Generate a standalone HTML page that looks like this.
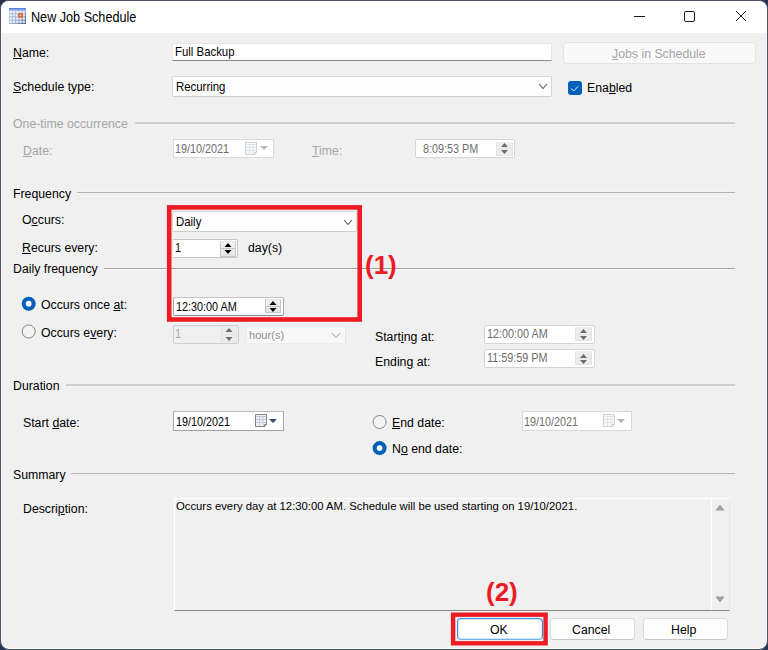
<!DOCTYPE html><html><head><meta charset="utf-8"><title>New Job Schedule</title><style>
*{margin:0;padding:0}
html,body{width:768px;height:650px;overflow:hidden}
body{background:#243451;position:relative;font-family:"Liberation Sans",sans-serif}
.b{position:absolute}
.t{position:absolute;white-space:nowrap;line-height:14px;font-family:"Liberation Sans",sans-serif}
u{text-decoration:underline;text-underline-offset:1px}
#win{left:0;top:0;width:768px;height:650px;background:#f0f0f0;border:1px solid #4d5565;border-radius:9px;box-sizing:border-box;box-shadow:inset 0 0 0 1px #f8f8f6}
#title{left:1px;top:1px;width:766px;height:32px;background:#fff;border-radius:8px 8px 0 0}
</style></head><body>
<div class="b" id="win"></div>
<div class="b" id="title"></div>
<svg class="b" style="left:9px;top:8px" width="17" height="16">
<defs><linearGradient id="g1" x1="0" y1="0" x2="1" y2="1"><stop offset="0" stop-color="#b9cae6"/><stop offset="0.6" stop-color="#9aaed0"/><stop offset="1" stop-color="#4d5f8c"/></linearGradient>
<linearGradient id="g2" x1="0" y1="0" x2="0" y2="1"><stop offset="0" stop-color="#3d6fe0"/><stop offset="1" stop-color="#9fb8ec"/></linearGradient></defs>
<rect x="0" y="0" width="17" height="16" fill="url(#g1)"/>
<rect x="0" y="0" width="17" height="2.2" fill="url(#g2)"/>
<g fill="#f2f6fc"><rect x="0.7" y="3.0" width="2.2" height="2.2"/><rect x="3.9" y="3.0" width="2.2" height="2.2"/><rect x="7.2" y="3.0" width="2.2" height="2.2"/><rect x="10.4" y="3.0" width="2.2" height="2.2"/><rect x="13.6" y="3.0" width="2.2" height="2.2"/><rect x="0.7" y="6.2" width="2.2" height="2.2"/><rect x="3.9" y="6.2" width="2.2" height="2.2"/><rect x="7.2" y="6.2" width="2.2" height="2.2"/><rect x="10.4" y="6.2" width="2.2" height="2.2"/><rect x="13.6" y="6.2" width="2.2" height="2.2"/><rect x="0.7" y="9.5" width="2.2" height="2.2"/><rect x="3.9" y="9.5" width="2.2" height="2.2"/><rect x="7.2" y="9.5" width="2.2" height="2.2"/><rect x="10.4" y="9.5" width="2.2" height="2.2"/><rect x="13.6" y="9.5" width="2.2" height="2.2"/><rect x="0.7" y="12.7" width="2.2" height="2.2"/><rect x="3.9" y="12.7" width="2.2" height="2.2"/><rect x="7.2" y="12.7" width="2.2" height="2.2"/><rect x="10.4" y="12.7" width="2.2" height="2.2"/><rect x="13.6" y="12.7" width="2.2" height="2.2"/></g>
<circle cx="11.5" cy="7.3" r="2.6" fill="#e3603c"/><circle cx="11.5" cy="7.3" r="0.9" fill="#fbe6dc"/>
</svg>
<div class="t" style="left:31px;top:10px;font-size:14.2px;color:#000;transform:scaleX(0.89);transform-origin:0 0;">New Job Schedule</div>
<svg class="b" style="left:630px;top:8px" width="130" height="18"><path d="M4 8.5H15" stroke="#1a1a1a" stroke-width="1"/><rect x="54.5" y="3.5" width="10" height="10" rx="1.5" fill="none" stroke="#1a1a1a" stroke-width="1"/><path d="M106 3L116 13M116 3L106 13" stroke="#1a1a1a" stroke-width="1"/></svg>
<div class="t" style="left:13px;top:46px;font-size:12.3px;color:#000;"><u>N</u>ame:</div>
<div class="t" style="left:13px;top:80px;font-size:12.3px;color:#000;"><u>S</u>chedule type:</div>
<div class="b" style="left:172px;top:43px;width:380px;height:18px;box-sizing:border-box;background:#fff;border:1px solid #e6e6e6;border-bottom:1px solid #8a8a8a"></div>
<div class="t" style="left:175px;top:45px;font-size:12.2px;color:#000;transform:scaleX(0.935);transform-origin:0 0;">Full Backup</div>
<div class="b" style="left:172px;top:76px;width:380px;height:21px;box-sizing:border-box;background:#fdfdfd;border:1px solid #d9d9d9;border-bottom-color:#cdcdcd;border-radius:2px"></div>
<div class="t" style="left:176px;top:80px;font-size:12.2px;color:#000;transform:scaleX(0.935);transform-origin:0 0;">Recurring</div>
<svg class="b" style="left:538px;top:83px" width="10" height="6.5"><path d="M1 1L5.0 5.5L9 1" fill="none" stroke="#5a5a5a" stroke-width="1.1"/></svg>
<div class="b" style="left:563px;top:42px;width:193px;height:22px;box-sizing:border-box;background:#f9f9f9;border:1px solid #e3e3e3;border-radius:4px"></div>
<div class="t" style="left:612px;top:47px;font-size:12.3px;color:#a6a6a6;"><u>J</u>obs in Schedule</div>
<svg class="b" style="left:568px;top:81px" width="14" height="14"><rect x="0" y="0" width="14" height="14" rx="3" fill="#005fb8"/><path d="M3.2 7.6L5.9 9.9L10.3 5.2" fill="none" stroke="#e4eefa" stroke-width="1"/></svg>
<div class="t" style="left:587px;top:81px;font-size:12.3px;color:#000;">Ena<u>b</u>led</div>
<div class="t" style="left:13px;top:117px;font-size:12.3px;color:#a6a6a6;">One-time occurrence</div>
<div class="b" style="left:135px;top:122px;width:600px;height:1px;box-sizing:border-box;background:#d6d6d6"></div>
<div class="b" style="left:135px;top:123px;width:600px;height:1px;box-sizing:border-box;background:#cbcbcb"></div>
<div class="b" style="left:135px;top:124px;width:600px;height:1px;box-sizing:border-box;background:#f6f6f6"></div>
<div class="t" style="left:23px;top:144px;font-size:12.3px;color:#a6a6a6;"><u>D</u>ate:</div>
<div class="b" style="left:173px;top:139px;width:101px;height:19px;box-sizing:border-box;background:#fff;border:1px solid #d9d9d9"></div>
<div class="t" style="left:175px;top:142px;font-size:12.0px;color:#6d6d6d;transform:scaleX(0.9);transform-origin:0 0;">19/10/2021</div>
<svg class="b" style="left:245px;top:142px" width="14" height="14"><path d="M0.5 0.5H11.5V10.5L9.5 12.5H0.5Z" fill="#f7f8fb" stroke="#d3cfcf" stroke-width="1"/><path d="M1 2.5H11M4.5 3V12M8 3V12M1 5.5H11M1 8.5H11" stroke="#e2e4ea" stroke-width="1"/><path d="M11.5 10.5H9.5V12.5" fill="none" stroke="#d3cfcf" stroke-width="1"/></svg>
<svg class="b" style="left:260px;top:146px" width="9" height="5"><path d="M0 0H8L4 4Z" fill="#b4b4b4"/></svg>
<div class="t" style="left:312px;top:144px;font-size:12.3px;color:#a6a6a6;"><u>T</u>ime:</div>
<div class="b" style="left:415px;top:139px;width:100px;height:19px;box-sizing:border-box;background:#fff;border:1px solid #d5d5d5;border-radius:2px"></div>
<div class="t" style="left:423px;top:142px;font-size:12.0px;color:#6d6d6d;transform:scaleX(0.9);transform-origin:0 0;">8:09:53 PM</div>
<div class="b" style="left:496px;top:142px;width:17px;height:14px;background:#ededed;border:1px solid #e3e3e3;border-top-color:transparent;box-sizing:border-box"></div>
<div class="b" style="left:496px;top:148px;width:17px;height:1px;background:#e3e3e3"></div>
<svg class="b" style="left:496px;top:142px" width="17" height="14"><path d="M5.0 5L8.5 1L12.0 5Z" fill="#6d6d6d"/><path d="M5.0 8L8.5 12L12.0 8Z" fill="#6d6d6d"/></svg>
<div class="t" style="left:13px;top:187px;font-size:12.3px;color:#000;">Frequency</div>
<div class="b" style="left:77px;top:191px;width:658px;height:1px;box-sizing:border-box;background:#f4f4f4"></div>
<div class="b" style="left:77px;top:192px;width:658px;height:1px;box-sizing:border-box;background:#b2b2b2"></div>
<div class="b" style="left:77px;top:193px;width:658px;height:1px;box-sizing:border-box;background:#f4f4f4"></div>
<div class="t" style="left:22px;top:213px;font-size:12.3px;color:#000;">O<u>c</u>curs:</div>
<div class="b" style="left:172px;top:211px;width:185px;height:21px;box-sizing:border-box;background:#fdfdfd;border:1px solid #d9d9d9;border-bottom-color:#cdcdcd;border-radius:2px"></div>
<div class="t" style="left:176px;top:215px;font-size:12.2px;color:#000;transform:scaleX(0.935);transform-origin:0 0;">Daily</div>
<svg class="b" style="left:343px;top:219px" width="10" height="6.5"><path d="M1 1L5.0 5.5L9 1" fill="none" stroke="#5a5a5a" stroke-width="1.1"/></svg>
<div class="t" style="left:22px;top:241px;font-size:12.3px;color:#000;"><u>R</u>ecurs every:</div>
<div class="b" style="left:172px;top:239px;width:66px;height:19px;box-sizing:border-box;background:#fff;border:1px solid #c4c8cc;border-left-color:#dde3e6;border-radius:2px"></div>
<div class="t" style="left:175px;top:241px;font-size:12.0px;color:#000;transform:scaleX(0.9);transform-origin:0 0;">1</div>
<div class="b" style="left:220px;top:241px;width:16px;height:16px;background:linear-gradient(#f2f2f2,#e6e6e6);border:1px solid #c6c6c6;border-top-color:transparent;box-sizing:border-box"></div>
<div class="b" style="left:220px;top:248px;width:16px;height:1px;background:#c6c6c6"></div>
<svg class="b" style="left:220px;top:241px" width="16" height="16"><path d="M4.5 6L8.0 2L11.5 6Z" fill="#000"/><path d="M4.5 9L8.0 13L11.5 9Z" fill="#000"/></svg>
<div class="t" style="left:248px;top:241px;font-size:12.3px;color:#000;">day(s)</div>
<div class="t" style="left:13px;top:262px;font-size:12.3px;color:#000;">Daily frequency</div>
<div class="b" style="left:104px;top:268px;width:631px;height:1px;box-sizing:border-box;background:#9f9f9f"></div>
<div class="b" style="left:104px;top:269px;width:631px;height:1px;box-sizing:border-box;background:#fbfbfb"></div>
<svg class="b" style="left:20px;top:295px" width="17" height="17"><circle cx="8.70" cy="8.70" r="7" fill="#005fb8"/><circle cx="8.70" cy="8.70" r="2.9" fill="#fff"/></svg>
<div class="t" style="left:41px;top:298px;font-size:12.3px;color:#000;">Occurs once <u>a</u>t:</div>
<div class="b" style="left:173px;top:297px;width:111px;height:19px;box-sizing:border-box;background:#fff;border:1px solid #a8a8a8;border-top-color:#c4c4c4;border-bottom-color:#8c8c8c;border-radius:2px"></div>
<div class="t" style="left:176px;top:300px;font-size:12.0px;color:#000;transform:scaleX(0.9);transform-origin:0 0;">12:30:00 AM</div>
<div class="b" style="left:265px;top:299px;width:16px;height:14px;background:linear-gradient(#f2f2f2,#e6e6e6);border:1px solid #c6c6c6;border-top-color:transparent;box-sizing:border-box"></div>
<div class="b" style="left:265px;top:306px;width:16px;height:1px;background:#c6c6c6"></div>
<svg class="b" style="left:265px;top:299px" width="16" height="14"><path d="M4.5 6L8.0 2L11.5 6Z" fill="#000"/><path d="M4.5 9L8.0 13L11.5 9Z" fill="#000"/></svg>
<svg class="b" style="left:20px;top:323px" width="17" height="17"><circle cx="8.70" cy="8.50" r="6.5" fill="#f3f3f3" stroke="#868686" stroke-width="1"/></svg>
<div class="t" style="left:41px;top:326px;font-size:12.3px;color:#000;">Occurs e<u>v</u>ery:</div>
<div class="b" style="left:173px;top:325px;width:66px;height:19px;box-sizing:border-box;background:#f0f0f0;border:1px solid #cdcdcd;border-radius:2px"></div>
<div class="t" style="left:175px;top:327px;font-size:12.0px;color:#a6a6a6;transform:scaleX(0.9);transform-origin:0 0;">1</div>
<div class="b" style="left:221px;top:326px;width:16px;height:16px;background:#ededed;border:1px solid #e3e3e3;border-top-color:transparent;box-sizing:border-box"></div>
<div class="b" style="left:221px;top:334px;width:16px;height:1px;background:#e3e3e3"></div>
<svg class="b" style="left:221px;top:326px" width="16" height="16"><path d="M4.5 6L8.0 2L11.5 6Z" fill="#6d6d6d"/><path d="M4.5 11L8.0 15L11.5 11Z" fill="#6d6d6d"/></svg>
<div class="b" style="left:246px;top:325px;width:100px;height:19px;box-sizing:border-box;background:#f8f8f8;border:1px solid #ececec;border-right-color:#e4e4e4;border-radius:3px"></div>
<div class="t" style="left:249px;top:328px;font-size:11.1px;color:#8f8f8f;">hour(s)</div>
<svg class="b" style="left:331px;top:332px" width="10" height="6.5"><path d="M1 1L5.0 5.5L9 1" fill="none" stroke="#b0b0b0" stroke-width="1.1"/></svg>
<div class="t" style="left:375px;top:330px;font-size:12.3px;color:#000;">Start<u>i</u>ng at:</div>
<div class="t" style="left:375px;top:355px;font-size:12.3px;color:#000;">Endin<u>g</u> at:</div>
<div class="b" style="left:484px;top:325px;width:111px;height:19px;box-sizing:border-box;background:#fff;border:1px solid #d5d5d5;border-radius:2px"></div>
<div class="t" style="left:487px;top:327px;font-size:12.0px;color:#6d6d6d;transform:scaleX(0.9);transform-origin:0 0;">12:00:00 AM</div>
<div class="b" style="left:575px;top:327px;width:17px;height:14px;background:#ededed;border:1px solid #e3e3e3;border-top-color:transparent;box-sizing:border-box"></div>
<div class="b" style="left:575px;top:334px;width:17px;height:1px;background:#e3e3e3"></div>
<svg class="b" style="left:575px;top:327px" width="17" height="14"><path d="M5.0 6L8.5 2L12.0 6Z" fill="#6d6d6d"/><path d="M5.0 9L8.5 13L12.0 9Z" fill="#6d6d6d"/></svg>
<div class="b" style="left:484px;top:349px;width:111px;height:19px;box-sizing:border-box;background:#fff;border:1px solid #d5d5d5;border-radius:2px"></div>
<div class="t" style="left:487px;top:351px;font-size:12.0px;color:#6d6d6d;transform:scaleX(0.9);transform-origin:0 0;">11:59:59 PM</div>
<div class="b" style="left:575px;top:351px;width:17px;height:14px;background:#ededed;border:1px solid #e3e3e3;border-top-color:transparent;box-sizing:border-box"></div>
<div class="b" style="left:575px;top:358px;width:17px;height:1px;background:#e3e3e3"></div>
<svg class="b" style="left:575px;top:351px" width="17" height="14"><path d="M5.0 7L8.5 3L12.0 7Z" fill="#6d6d6d"/><path d="M5.0 9L8.5 13L12.0 9Z" fill="#6d6d6d"/></svg>
<div class="t" style="left:13px;top:379px;font-size:12.3px;color:#000;">Duration</div>
<div class="b" style="left:66px;top:384px;width:669px;height:1px;box-sizing:border-box;background:#d0d0d0"></div>
<div class="b" style="left:66px;top:385px;width:669px;height:1px;box-sizing:border-box;background:#d0d0d0"></div>
<div class="b" style="left:66px;top:386px;width:669px;height:1px;box-sizing:border-box;background:#f5f5f5"></div>
<div class="t" style="left:23px;top:416px;font-size:12.3px;color:#000;">Start <u>d</u>ate:</div>
<div class="b" style="left:173px;top:411px;width:111px;height:20px;box-sizing:border-box;background:#fff;border:1px solid #a8a8a8;border-top-color:#bcbcbc;border-bottom-color:#a0a0a0"></div>
<div class="t" style="left:176px;top:415px;font-size:12.0px;color:#000;transform:scaleX(0.9);transform-origin:0 0;">19/10/2021</div>
<svg class="b" style="left:255px;top:414px" width="14" height="14"><path d="M0.5 0.5H11.5V10.5L9.5 12.5H0.5Z" fill="#f1f3f8" stroke="#8c8484" stroke-width="1"/><path d="M1 2.5H11M4.5 3V12M8 3V12M1 5.5H11M1 8.5H11" stroke="#c6cad6" stroke-width="1"/><path d="M11.5 10.5H9.5V12.5" fill="none" stroke="#8c8484" stroke-width="1"/></svg>
<svg class="b" style="left:269px;top:419px" width="9" height="5"><path d="M0 0H8L4 4Z" fill="#3b4a6b"/></svg>
<svg class="b" style="left:371px;top:414px" width="17" height="17"><circle cx="8.60" cy="8.00" r="6.5" fill="#f3f3f3" stroke="#868686" stroke-width="1"/></svg>
<div class="t" style="left:392px;top:416px;font-size:12.3px;color:#000;"><u>E</u>nd date:</div>
<svg class="b" style="left:371px;top:440px" width="17" height="17"><circle cx="8.60" cy="8.10" r="7" fill="#005fb8"/><circle cx="8.60" cy="8.10" r="2.9" fill="#fff"/></svg>
<div class="t" style="left:392px;top:442px;font-size:12.3px;color:#000;">N<u>o</u> end date:</div>
<div class="b" style="left:522px;top:411px;width:110px;height:20px;box-sizing:border-box;background:#fff;border:1px solid #d9d9d9"></div>
<div class="t" style="left:524px;top:415px;font-size:12.0px;color:#6d6d6d;transform:scaleX(0.9);transform-origin:0 0;">19/10/2021</div>
<svg class="b" style="left:603px;top:414px" width="14" height="14"><path d="M0.5 0.5H11.5V10.5L9.5 12.5H0.5Z" fill="#f7f8fb" stroke="#d3cfcf" stroke-width="1"/><path d="M1 2.5H11M4.5 3V12M8 3V12M1 5.5H11M1 8.5H11" stroke="#e2e4ea" stroke-width="1"/><path d="M11.5 10.5H9.5V12.5" fill="none" stroke="#d3cfcf" stroke-width="1"/></svg>
<svg class="b" style="left:617px;top:419px" width="9" height="5"><path d="M0 0H8L4 4Z" fill="#b4b4b4"/></svg>
<div class="t" style="left:13px;top:468px;font-size:12.3px;color:#000;">Summary</div>
<div class="b" style="left:71px;top:472px;width:664px;height:1px;box-sizing:border-box;background:#f4f4f4"></div>
<div class="b" style="left:71px;top:473px;width:664px;height:1px;box-sizing:border-box;background:#b4b4b4"></div>
<div class="t" style="left:23px;top:502px;font-size:12.3px;color:#000;">Descri<u>p</u>tion:</div>
<div class="b" style="left:174px;top:498px;width:556px;height:113px;box-sizing:border-box;border-top:1px solid #fff;border-left:1px solid #fff;border-bottom:1px solid #8a8a8a;border-right:1px solid #e6e6e6"></div>
<div class="b" style="left:711px;top:499px;width:1px;height:111px;box-sizing:border-box;background:#fff"></div>
<svg class="b" style="left:715px;top:503px" width="10" height="8"><path d="M1 7L5 2L9 7Z" fill="#a3a3a3" stroke="#a3a3a3" stroke-width="1" stroke-linejoin="round"/></svg>
<svg class="b" style="left:715px;top:596px" width="10" height="8"><path d="M1 1L5 6L9 1Z" fill="#a3a3a3" stroke="#a3a3a3" stroke-width="1" stroke-linejoin="round"/></svg>
<div class="t" style="left:176px;top:499px;font-size:11.3px;color:#000;">Occurs every day at 12:30:00 AM. Schedule will be used starting on 19/10/2021.</div>
<div class="b" style="left:457px;top:618px;width:86px;height:22px;box-sizing:border-box;background:#fff;border:1px solid #3592e0;border-bottom-color:#6fb0e8;box-shadow:inset 0 0 0 1px #d2e7f8;border-radius:4px"></div>
<div class="t" style="left:490px;top:623px;font-size:12.3px;color:#000;">OK</div>
<div class="b" style="left:550px;top:618px;width:85px;height:22px;box-sizing:border-box;background:#fdfdfd;border:1px solid #dadada;border-bottom-color:#c6c6c6;border-radius:4px"></div>
<div class="t" style="left:572px;top:623px;font-size:12.3px;color:#000;">Cancel</div>
<div class="b" style="left:643px;top:618px;width:85px;height:22px;box-sizing:border-box;background:#fdfdfd;border:1px solid #dadada;border-bottom-color:#c6c6c6;border-radius:4px"></div>
<div class="t" style="left:671px;top:623px;font-size:12.3px;color:#000;">Help</div>
<svg class="b" style="left:0;top:0" width="768" height="650"><rect x="169.2" y="207.4" width="190.5" height="112.1" fill="none" stroke="#ed1c24" stroke-width="4.6"/><rect x="453.1" y="614.7" width="92.5" height="28.6" fill="none" stroke="#ed1c24" stroke-width="4.4"/></svg>
<div class="t" style="left:365px;top:250px;font-size:26px;line-height:30px;font-weight:bold;color:#ed1c24">(1)</div>
<div class="t" style="left:486px;top:577px;font-size:26px;line-height:30px;font-weight:bold;color:#ed1c24">(2)</div>
</body></html>
